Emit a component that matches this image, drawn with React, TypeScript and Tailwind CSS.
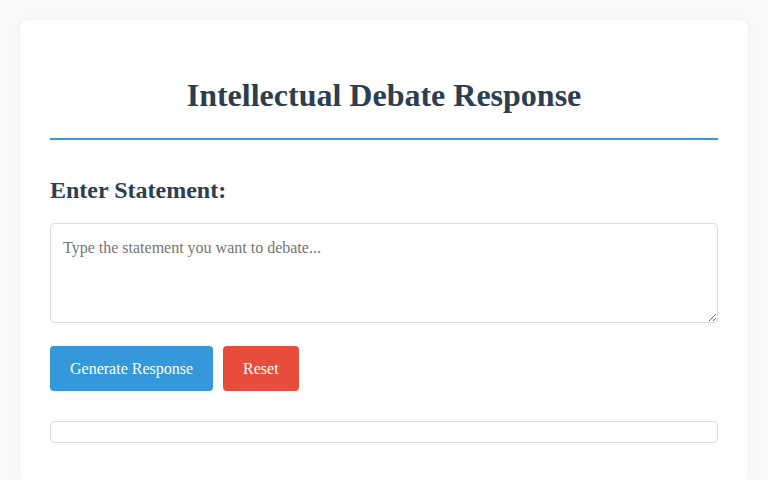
export default function App() {
  return (
    <div className="min-h-screen bg-[#f8f9fa] p-5" style={{ fontFamily: '"Liberation Serif", "Times New Roman", serif' }}>
      <div className="bg-white rounded-lg shadow-[0_0_10px_rgba(0,0,0,0.05)] px-[30px] pt-[30px] pb-[40px]">
        <h1 className="text-center text-[32px] leading-[37px] font-bold text-[#2c3e50] mt-[27px] pb-[24px] border-b-2 border-[#3498db]">
          Intellectual Debate Response
        </h1>
        <h2 className="mt-[36px] text-[24px] leading-[28px] font-bold text-[#2c3e50]">Enter Statement:</h2>
        <textarea
          className="mt-[19px] block w-full h-[100px] border border-[#ddd] rounded p-3 text-[16px] text-[#333] placeholder:text-[#757575] outline-none"
          placeholder="Type the statement you want to debate..."
          style={{ fontFamily: '"Liberation Serif", "Times New Roman", serif' }}
        />
        <div className="mt-[23px] flex gap-[10px]">
          <button className="h-[45px] px-5 rounded bg-[#3498db] text-white text-[16px]">Generate Response</button>
          <button className="h-[45px] px-5 rounded bg-[#e74c3c] text-white text-[16px]">Reset</button>
        </div>
        <div className="mt-[30px] h-[22px] border border-[#ddd] rounded" />
      </div>
    </div>
  );
}
